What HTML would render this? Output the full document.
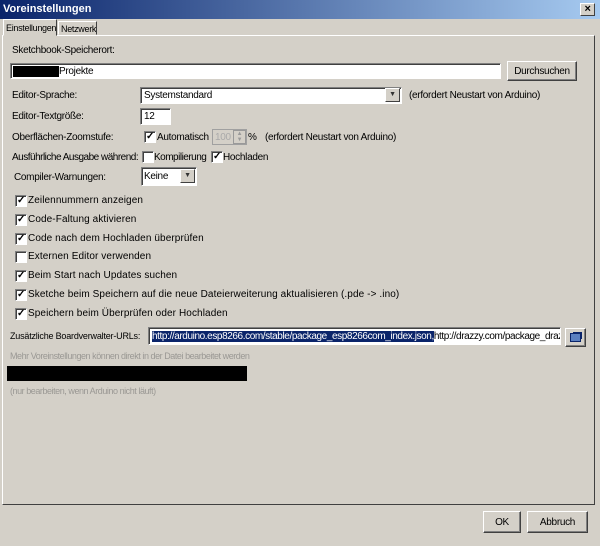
<!DOCTYPE html><html><head><style>
*{margin:0;padding:0;box-sizing:border-box}
body{width:600px;height:546px;background:#d4d0c8;font:10px "Liberation Sans",sans-serif;letter-spacing:-0.3px;color:#000;position:relative;overflow:hidden}
.a{position:absolute;white-space:nowrap}
.title{left:0;top:0;width:600px;height:19px;background:linear-gradient(90deg,#0a246a,#a6caf0);color:#fff;font-weight:bold;font-size:11px;letter-spacing:0;padding:3px 0 0 3px}
.close{left:580px;top:3px;width:15px;height:13px;background:#d4d0c8;border:1px solid;border-color:#fff #404040 #404040 #fff;font-size:11px;font-weight:bold;text-align:center;line-height:10px;color:#000}
.sunk{background:#fff;border:1px solid;border-color:#808080 #fff #fff #808080;box-shadow:inset 1px 1px 0 #404040;overflow:hidden}
.btn{border:1px solid;border-color:#fff #404040 #404040 #fff;box-shadow:inset -1px -1px 0 #808080;text-align:center;background:#d4d0c8}
.cb{width:12px;height:12px;background:#fff;border:1px solid;border-color:#808080 #fff #fff #808080;box-shadow:inset 1px 1px 0 #404040;font-size:10px;line-height:10px;text-align:center;font-weight:bold}
.dd{width:15px;height:14px;background:#d4d0c8;border:1px solid;border-color:#fff #404040 #404040 #fff;font-size:7px;text-align:center;line-height:12px;color:#333}
.gray{color:#9a9894;font-size:9px;letter-spacing:-0.45px}
.l{letter-spacing:0.1px}
</style></head><body>
<div class="a title">Voreinstellungen</div>
<div class="a close">×</div>
<div class="a" style="left:2px;top:35px;width:593px;height:470px;border:1px solid;border-color:#fff #404040 #404040 #fff"></div>
<div class="a" style="left:3px;top:19px;width:54px;height:17px;border:1px solid;border-color:#fff #404040 transparent #fff;background:#d4d0c8;padding:3px 0 0 2px;font-size:9px;letter-spacing:-0.3px;overflow:hidden">Einstellungen</div>
<div class="a" style="left:58px;top:21px;width:39px;height:14px;border:1px solid;border-color:#fff #404040 transparent #fff;padding:2px 0 0 2px;font-size:9px;letter-spacing:-0.3px;overflow:hidden">Netzwerk</div>

<div class="a" style="left:12px;top:45px">Sketchbook-Speicherort:</div>
<div class="a sunk" style="left:10px;top:63px;width:491px;height:16px"></div>
<div class="a" style="left:13px;top:66px;width:46px;height:11px;background:#000"></div>
<div class="a" style="left:59px;top:66px">Projekte</div>
<div class="a btn" style="left:507px;top:61px;width:70px;height:20px;padding-top:4px">Durchsuchen</div>

<div class="a" style="left:12px;top:90px">Editor-Sprache:</div>
<div class="a sunk" style="left:140px;top:87px;width:262px;height:17px;padding:2px 3px">Systemstandard</div>
<div class="a dd" style="left:385px;top:88px">▼</div>
<div class="a" style="left:409px;top:90px">(erfordert Neustart von Arduino)</div>

<div class="a" style="left:12px;top:111px">Editor-Textgröße:</div>
<div class="a sunk" style="left:140px;top:108px;width:31px;height:17px;padding:2px 3px">12</div>

<div class="a" style="left:12px;top:132px">Oberflächen-Zoomstufe:</div>
<div class="a cb" style="left:144px;top:131px">✓</div>
<div class="a" style="left:157px;top:132px">Automatisch</div>
<div class="a" style="left:212px;top:129px;width:35px;height:16px;border:1px solid #a0a0a0;color:#aaa;padding:2px 2px">100</div>
<div class="a" style="left:233px;top:130px;width:13px;height:14px;border:1px solid #999;font-size:6px;line-height:6px;color:#999;text-align:center">▲<br>▼</div>
<div class="a" style="left:248px;top:132px">%</div>
<div class="a" style="left:265px;top:132px">(erfordert Neustart von Arduino)</div>

<div class="a" style="left:12px;top:152px;letter-spacing:-0.5px">Ausführliche Ausgabe während:</div>
<div class="a cb" style="left:142px;top:151px"></div>
<div class="a" style="left:154px;top:152px;letter-spacing:-0.5px">Kompilierung</div>
<div class="a cb" style="left:211px;top:151px">✓</div>
<div class="a" style="left:223px;top:152px">Hochladen</div>

<div class="a" style="left:14px;top:172px">Compiler-Warnungen:</div>
<div class="a sunk" style="left:141px;top:167px;width:56px;height:19px;padding:3px 2px">Keine</div>
<div class="a dd" style="left:180px;top:169px">▼</div>

<div class="a cb" style="left:15px;top:195px">✓</div><div class="a l" style="left:28px;top:195px">Zeilennummern anzeigen</div>
<div class="a cb" style="left:15px;top:214px">✓</div><div class="a l" style="left:28px;top:214px">Code-Faltung aktivieren</div>
<div class="a cb" style="left:15px;top:233px">✓</div><div class="a l" style="left:28px;top:233px">Code nach dem Hochladen überprüfen</div>
<div class="a cb" style="left:15px;top:251px"></div><div class="a l" style="left:28px;top:251px">Externen Editor verwenden</div>
<div class="a cb" style="left:15px;top:270px">✓</div><div class="a l" style="left:28px;top:270px">Beim Start nach Updates suchen</div>
<div class="a cb" style="left:15px;top:289px">✓</div><div class="a l" style="left:28px;top:289px">Sketche beim Speichern auf die neue Dateierweiterung aktualisieren (.pde -&gt; .ino)</div>
<div class="a cb" style="left:15px;top:308px">✓</div><div class="a l" style="left:28px;top:308px">Speichern beim Überprüfen oder Hochladen</div>

<div class="a" style="left:10px;top:331px;font-size:9px;letter-spacing:-0.2px">Zusätzliche Boardverwalter-URLs:</div>
<div class="a sunk" style="left:148px;top:327px;width:413px;height:18px;padding:3px 0 0 3px;letter-spacing:-0.4px"><span style="background:#0a246a;color:#fff">http://arduino.esp8266.com/stable/package_esp8266com_index.json,</span>http://drazzy.com/package_drazzy</div>
<div class="a btn" style="left:565px;top:328px;width:21px;height:19px"><div class="a" style="left:4px;top:4px;width:11px;height:9px;border:1px solid #0a246a;background:#5a7fc0;box-shadow:2px -2px 0 -1px #0a246a"></div></div>

<div class="a gray" style="left:10px;top:351px">Mehr Voreinstellungen können direkt in der Datei bearbeitet werden</div>
<div class="a" style="left:7px;top:366px;width:240px;height:15px;background:#000"></div>
<div class="a gray" style="left:10px;top:386px">(nur bearbeiten, wenn Arduino nicht läuft)</div>

<div class="a btn" style="left:483px;top:511px;width:38px;height:22px;padding-top:5px">OK</div>
<div class="a btn" style="left:527px;top:511px;width:61px;height:22px;padding-top:5px">Abbruch</div>
</body></html>
